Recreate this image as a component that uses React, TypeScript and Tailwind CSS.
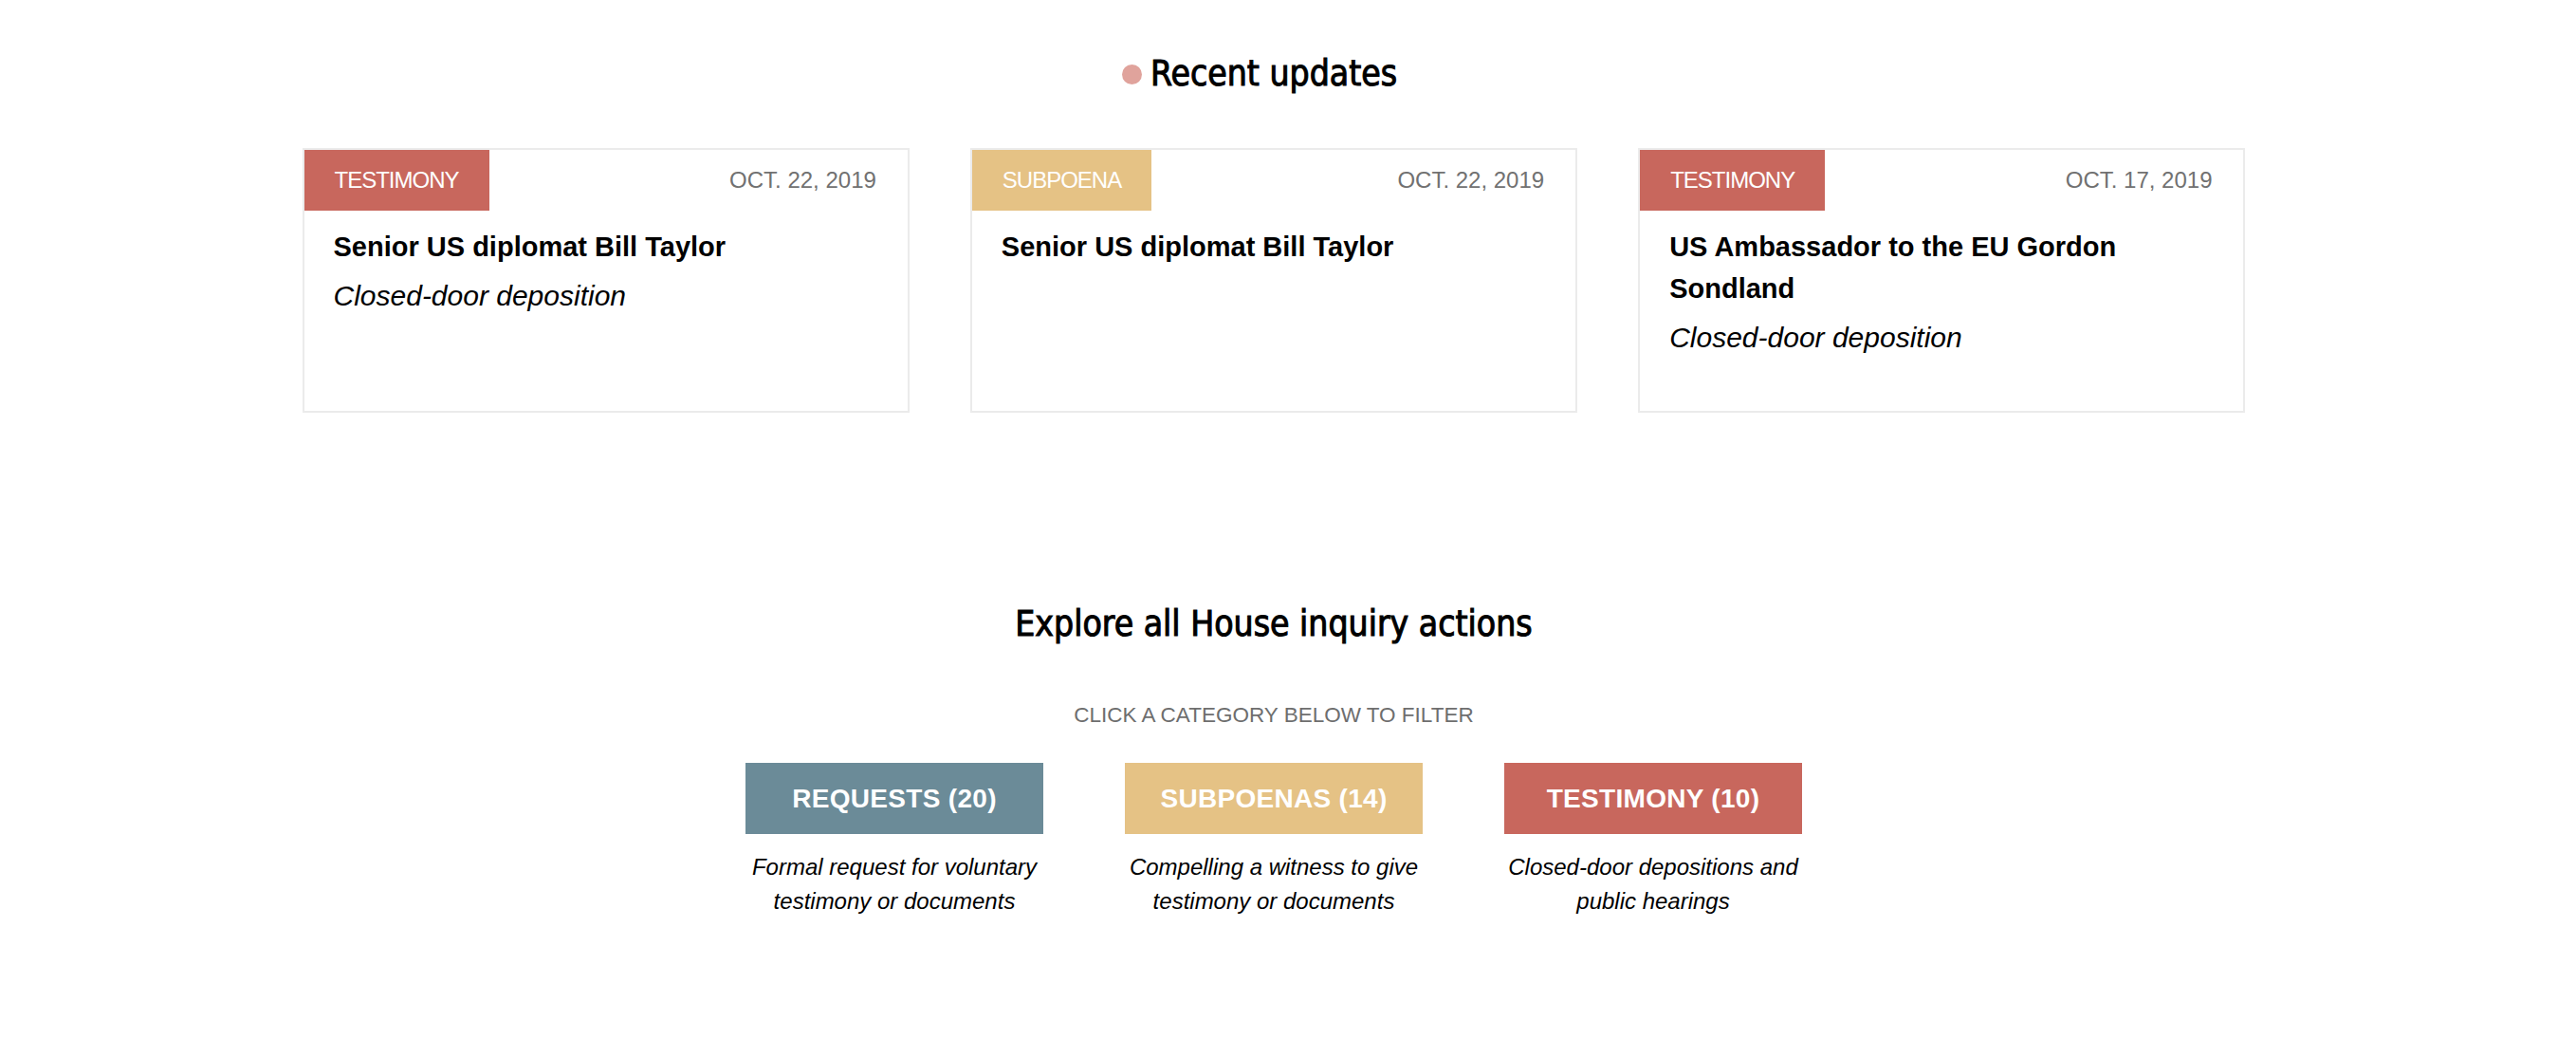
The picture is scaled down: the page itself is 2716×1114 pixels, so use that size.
type Kind = "testimony" | "subpoena" | "request";

type Update = {
    kind: Kind;
    label: string;
    date: string;
    title: string;
    note?: string;
};

type Category = {
    kind: Kind;
    label: string;
    count: number;
    blurb: string;
};

const fill: Record<Kind, string> = {
    testimony: "bg-[#c8675d]",
    subpoena: "bg-[#e5c285]",
    request: "bg-[#6b8b98]",
};

const updates: Update[] = [
    {
        kind: "testimony",
        label: "TESTIMONY",
        date: "OCT. 22, 2019",
        title: "Senior US diplomat Bill Taylor",
        note: "Closed-door deposition",
    },
    {
        kind: "subpoena",
        label: "SUBPOENA",
        date: "OCT. 22, 2019",
        title: "Senior US diplomat Bill Taylor",
    },
    {
        kind: "testimony",
        label: "TESTIMONY",
        date: "OCT. 17, 2019",
        title: "US Ambassador to the EU Gordon Sondland",
        note: "Closed-door deposition",
    },
];

const categories: Category[] = [
    {
        kind: "request",
        label: "REQUESTS",
        count: 20,
        blurb: "Formal request for voluntary testimony or documents",
    },
    {
        kind: "subpoena",
        label: "SUBPOENAS",
        count: 14,
        blurb: "Compelling a witness to give testimony or documents",
    },
    {
        kind: "testimony",
        label: "TESTIMONY",
        count: 10,
        blurb: "Closed-door depositions and public hearings",
    },
];

// condensed display face for the section headings
const headingFont =
    "font-['DejaVu_Sans_Condensed','Liberation_Sans',sans-serif] font-normal [-webkit-text-stroke:1px_black]";

function UpdateCard({ item }: { item: Update }) {
    return (
        <div className="min-h-[279px] border-2 border-[#ebebeb] bg-white">
            <div className="flex items-center justify-between">
                <span
                    className={`${fill[item.kind]} flex h-[64px] items-center px-[32px] text-[24px] tracking-[-1px] text-white`}>
                    {item.label}
                </span>
                <span className="pr-[33px] text-[24px] text-[#717171]">
                    {item.date}
                </span>
            </div>
            <div className="px-[31px] pb-[40px] pr-[33px] pt-[16px]">
                <h3 className="text-[29px] font-bold leading-[44px] text-black">
                    {item.title}
                </h3>
                {item.note && (
                    <p className="mt-[8px] text-[30px] italic leading-[44px] text-black">
                        {item.note}
                    </p>
                )}
            </div>
        </div>
    );
}

export default function App() {
    return (
        <div className="min-h-screen bg-white pr-[30px] font-['Liberation_Sans',Arial,sans-serif]">
            {/* Recent updates */}
            <section className="pt-[54px]">
                <div className="flex justify-center">
                    <h2
                        className={`${headingFont} relative text-[37px] leading-[48px] text-black`}>
                        {/* live dot hangs off the left of the title */}
                        <span className="absolute -left-[30px] top-[14px] h-[21px] w-[21px] rounded-full bg-[#e0a39c] [-webkit-text-stroke:0]" />
                        Recent updates
                    </h2>
                </div>

                <div className="mx-auto mt-[54px] grid w-[2049px] grid-cols-3 gap-x-[64px]">
                    {updates.map((u, i) => (
                        <UpdateCard key={i} item={u} />
                    ))}
                </div>
            </section>

            {/* Explore all actions */}
            <section className="mt-[199px] pb-[120px] text-center">
                <h2
                    className={`${headingFont} text-[37px] leading-[48px] text-black`}>
                    Explore all House inquiry actions
                </h2>
                <p className="mt-[57px] text-[22.5px] leading-[30px] text-[#6e6e6e]">
                    CLICK A CATEGORY BELOW TO FILTER
                </p>

                <div className="mt-[35px] flex justify-center gap-[86px]">
                    {categories.map((c) => (
                        <div key={c.label} className="w-[314px]">
                            <button
                                type="button"
                                className={`${fill[c.kind]} flex h-[75px] w-full items-center justify-center text-[28px] font-bold tracking-[0.3px] text-white`}>
                                {c.label} ({c.count})
                            </button>
                            <p className="mt-[17px] text-[24px] italic leading-[36px] text-black">
                                {c.blurb}
                            </p>
                        </div>
                    ))}
                </div>
            </section>
        </div>
    );
}
